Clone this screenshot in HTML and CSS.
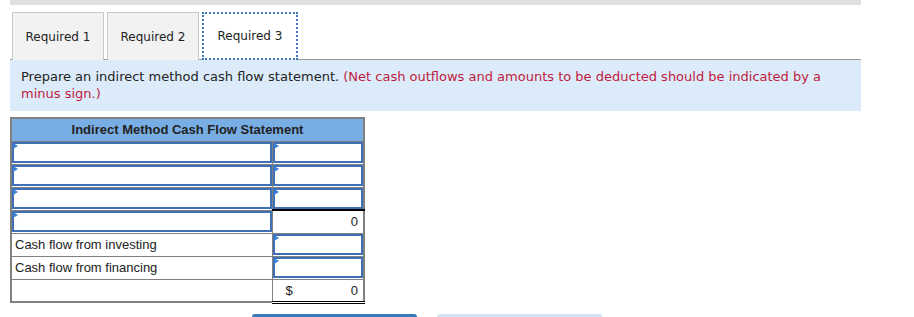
FILE: index.html
```html
<!DOCTYPE html>
<html lang="en">
<head>
    <meta charset="UTF-8">
    <title>Indirect Method Cash Flow Statement</title>
    <link rel="stylesheet" href="styles.css">
</head>
<body>
    <div class="wrap">
        <!-- top strip -->
        <div class="topbar"></div>

        <!-- question tabs -->
        <div class="tabs">
            <div class="tab">Required 1</div>
            <div class="tab">Required 2</div>
            <div class="tab active">Required 3</div>
        </div>

        <!-- instructions -->
        <div class="prompt">
            Prepare an indirect method cash flow statement.
            <span class="note">(Net cash outflows and amounts to be deducted should be indicated by a minus sign.)</span>
        </div>

        <!-- statement worksheet -->
        <table class="sheet">
            <tr>
                <th colspan="2">Indirect Method Cash Flow Statement</th>
            </tr>
            <tr>
                <td class="lbl"><div class="inp"></div></td>
                <td class="amt"><div class="inp"></div></td>
            </tr>
            <tr>
                <td class="lbl"><div class="inp"></div></td>
                <td class="amt"><div class="inp"></div></td>
            </tr>
            <tr>
                <td class="lbl"><div class="inp"></div></td>
                <td class="amt"><div class="inp"></div></td>
            </tr>
            <tr>
                <td class="lbl"><div class="inp"></div></td>
                <td class="amt sum"><div class="val">0</div></td>
            </tr>
            <tr>
                <td class="lbl text">Cash flow from investing</td>
                <td class="amt"><div class="inp"></div></td>
            </tr>
            <tr>
                <td class="lbl text">Cash flow from financing</td>
                <td class="amt"><div class="inp"></div></td>
            </tr>
            <tr>
                <td class="lbl"></td>
                <td class="amt total"><div class="val"><span>$</span><span>0</span></div></td>
            </tr>
        </table>

        <!-- navigation buttons -->
        <div class="nav">
            <div class="btn prev"></div>
            <div class="btn next"></div>
        </div>
    </div>
</body>
</html>
```

FILE: styles.css
```css
/* reset */
* {
    margin: 0;
    padding: 0;
    box-sizing: border-box;
}

body {
    background: #fff;
    font-family: "DejaVu Sans", Verdana, sans-serif;
    color: #222;
}

.wrap {
    margin-left: 10px;
    width: 851px;
}

.topbar {
    height: 5px;
    background: #e0e0e0;
}

/* tabs */
.tabs {
    display: flex;
    gap: 3px;
    padding: 7px 0 0 2px;
    border-bottom: 1px solid #999;
}

.tab {
    width: 92px;
    height: 48px;
    margin-bottom: -1px;
    display: flex;
    align-items: center;
    justify-content: center;
    font-size: 12px;
    background: #f2f2f2;
    border: 1px solid #c8c8c8;
    border-bottom: none;
    color: #222;
}

.tab.active {
    width: 96px;
    background: #fff;
    border: 2px dotted #3f78c0;
}

/* instructions */
.prompt {
    background: #dcebf9;
    padding: 8px 11px 9px;
    font-size: 13px;
    line-height: 17px;
    color: #222;
}

.note {
    color: #bf1b3f;
}

/* worksheet table */
.sheet {
    margin-top: 6px;
    width: 355px;
    border-collapse: collapse;
    border: 2px solid #808080;
    font-family: "Liberation Sans", Arial, sans-serif;
    font-size: 13px;
    color: #222;
}

.sheet th {
    height: 23px;
    background: #79aee5;
    font-weight: bold;
    text-align: center;
    border-bottom: 1px solid #808080;
}

.sheet td {
    height: 23px;
    padding: 0;
    border: 1px solid #808080;
}

.lbl {
    width: 261px;
}

.lbl.text {
    padding-left: 3px;
}

.inp {
    position: relative;
    height: 21px;
    border: 2px solid #3f6fb5;
}

/* blue marker on input cells */
.inp::before {
    content: "";
    position: absolute;
    left: -1px;
    top: -1px;
    border-top: 3px solid transparent;
    border-bottom: 3px solid transparent;
    border-left: 5px solid #3b7ed6;
}

.val {
    display: flex;
    justify-content: flex-end;
    padding: 0 5px 0 0;
    line-height: 21px;
}

.sum {
    border-top: 2px solid #000 !important;
}

.total {
    border-bottom: 3px double #000 !important;
}

.total .val {
    justify-content: space-between;
    padding-left: 13px;
}

/* navigation */
.nav {
    display: flex;
    gap: 20px;
    margin: 10px 0 0 242px;
}

.btn {
    width: 165px;
    height: 30px;
    border-radius: 3px;
}

.prev {
    background: #3b77bb;
}

.next {
    background: #d5e3f2;
}
```
